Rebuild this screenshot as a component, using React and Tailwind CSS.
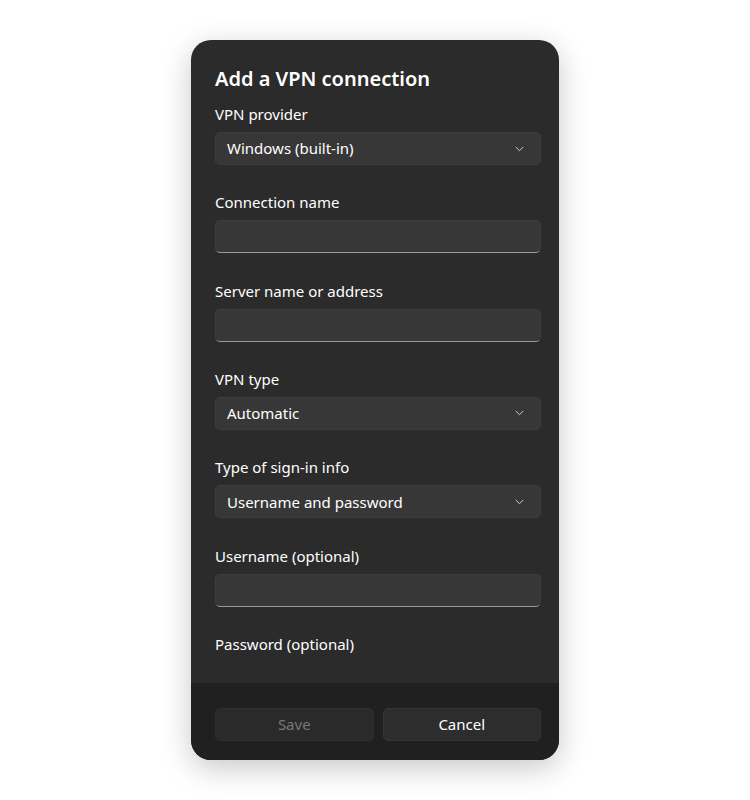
import React from "react";

const Chevron = () => (
  <svg width="9" height="6" viewBox="0 0 9 6" fill="none" className="shrink-0">
    <path d="M1 1.2l3.5 3.5L8 1.2" stroke="#cfcfcf" strokeWidth="1" strokeLinecap="round" strokeLinejoin="round" />
  </svg>
);

const Label = ({ children }) => (
  <p className="text-[15px] leading-5 text-white mb-[8px]">{children}</p>
);

const Select = ({ value }) => (
  <div className="h-[33px] rounded-[5px] bg-[#373737] border border-[#3d3d3d] flex items-center justify-between pl-[11px] pr-[16px] mb-[27.33px]">
    <span className="text-[15px] text-white">{value}</span>
    <Chevron />
  </div>
);

const TextField = () => (
  <div className="h-[33px] rounded-[5px] bg-[#373737] border border-[#3d3d3d] border-b-[#9a9a9a] mb-[27.33px]" />
);

const App = () => {
  return (
    <div
      className="w-[750px] h-[800px] bg-white flex items-center justify-center"
      style={{ fontFamily: '"Noto Sans", "Open Sans", sans-serif' }}
    >
      <div className="w-[368px] h-[720px] rounded-[20px] overflow-hidden bg-[#2b2b2b] flex flex-col shadow-[0_8px_30px_rgba(0,0,0,0.22)]">
        <div className="flex-1 overflow-hidden pl-6 pr-[18px] pt-[25px]">
          <h1 className="text-[20px] leading-7 font-semibold text-white mb-[11px]">
            Add a VPN connection
          </h1>
          <Label>VPN provider</Label>
          <Select value="Windows (built-in)" />
          <Label>Connection name</Label>
          <TextField />
          <Label>Server name or address</Label>
          <TextField />
          <Label>VPN type</Label>
          <Select value="Automatic" />
          <Label>Type of sign-in info</Label>
          <Select value="Username and password" />
          <Label>Username (optional)</Label>
          <TextField />
          <Label>Password (optional)</Label>
        </div>
        <div className="h-[77px] shrink-0 bg-[#202020] pl-6 pr-[18px] pt-[25px] flex gap-[9px]">
          <button className="flex-1 h-[33px] rounded-[5px] bg-[#2a2a2a] border border-[#2f2f2f] text-[15px] text-[#787878]">
            Save
          </button>
          <button className="flex-1 h-[33px] rounded-[5px] bg-[#2d2d2d] border border-[#353535] text-[15px] text-white">
            Cancel
          </button>
        </div>
      </div>
    </div>
  );
};

export default App;
